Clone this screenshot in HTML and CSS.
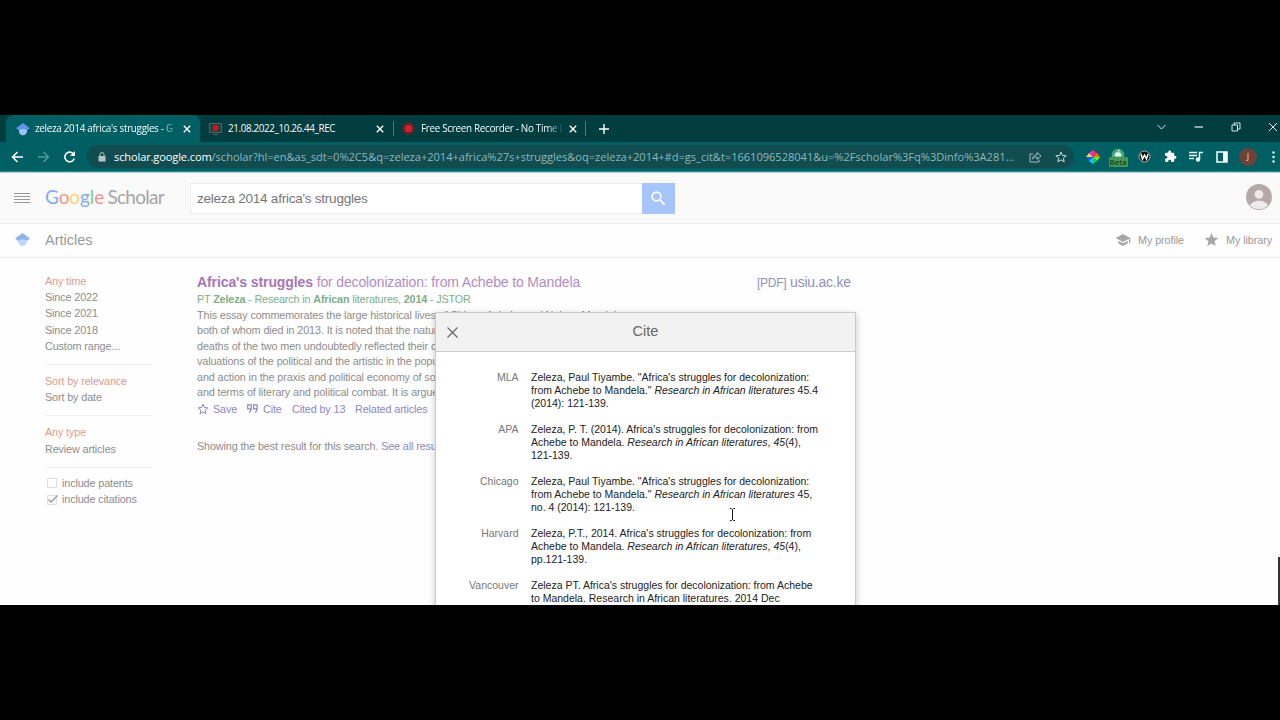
FILE: index.html
```html
<!DOCTYPE html>
<html lang="en">
<head>
<meta charset="UTF-8">
<meta name="viewport" content="width=device-width, initial-scale=1.0">
<title>zeleza 2014 africa's struggles - Google Scholar</title>
<link rel="stylesheet" href="styles.css">
</head>
<body>

<div class="window">
    <div class="tabs">
        <div class="tab active">
            <svg class="cap" width="14" height="14" viewBox="0 0 16 16"><path d="M8 5a4.6 4.6 0 0 1 4.6 5.2A4.6 4.6 0 0 1 8 15a4.6 4.6 0 0 1-4.6-4.8A4.6 4.6 0 0 1 8 5z" fill="#a0c3ff"/><path d="M8 1L0 7l3.500 2.500A6 6 0 0 1 8 8a6 6 0 0 1 4.500 1.500L16 7z" fill="#5f95ec"/></svg>
            <span class="tab-title">zeleza 2014 africa's struggles - G</span>
            <svg class="close" width="8" height="8" viewBox="0 0 8 8"><path d="M.8.8l6.4 6.4M7.2.8L.8 7.2"/></svg>
        </div>
        <div class="tab second">
            <svg class="cap" width="13" height="12" viewBox="0 0 13 12"><path d="M.5.5h12v9H.5zM4 11.5h5" fill="#283c40" stroke="#536468"/><circle cx="6.5" cy="5" r="3" fill="#cc1620"/></svg>
            <span class="tab-title">21.08.2022_10.26.44_REC</span>
            <svg class="close" width="8" height="8" viewBox="0 0 8 8"><path d="M.8.8l6.4 6.4M7.2.8L.8 7.2"/></svg>
        </div>
        <div class="tab third">
            <svg class="cap" width="13" height="13" viewBox="0 0 13 13"><circle cx="6.5" cy="6.5" r="5.6" fill="#301f24" stroke="#9c2228"/><circle cx="6.5" cy="6.5" r="4" fill="#d3202a"/></svg>
            <span class="tab-title">Free Screen Recorder - No Time L</span>
            <svg class="close" width="8" height="8" viewBox="0 0 8 8"><path d="M.8.8l6.4 6.4M7.2.8L.8 7.2"/></svg>
        </div>
        <svg class="new-tab" width="10" height="10" viewBox="0 0 10 10"><path d="M5 0v10M0 5h10" stroke="#fff" stroke-width="1.4"/></svg>
        <svg class="controls" width="124" height="14" viewBox="0 0 124 14" fill="none" stroke="#d9e8e8"><path d="M1.500 5l4 4 4-4"/><path d="M38.500 7h8.500" stroke-width="1.300"/><path d="M76 5h5.500v6H76zM78 5V3h6v6h-2.500"/><path d="M113 3l8 8M121 3l-8 8"/></svg>
    </div>

    <div class="toolbar">
        <svg class="nav" width="66" height="14" viewBox="0 0 66 14" fill="none"><path d="M12 7H2M6.500 2L1.500 7l5 5" stroke="#fff" stroke-width="1.500"/><path d="M27 7h10M32.500 2l5 5-5 5" stroke="#5c9a9c" stroke-width="1.300"/><path d="M62 3.500a4.800 4.800 0 1 0 1.200 5" stroke="#fff" stroke-width="1.600"/><path d="M64 1v5h-5z" fill="#fff"/></svg>
        <div class="address">
            <svg width="8" height="10" viewBox="0 0 8 10"><path d="M.5 4h7v5.500h-7z" fill="#b5c5c7"/><path d="M2 4V2.500a2 2 0 0 1 4 0V4" fill="none" stroke="#b5c5c7"/></svg>
            <div class="url"><b>scholar.google.com</b>/scholar?hl=en&amp;as_sdt=0%2C5&amp;q=zeleza+2014+africa%27s+struggles&amp;oq=zeleza+2014+#d=gs_cit&amp;t=1661096528041&amp;u=%2Fscholar%3Fq%3Dinfo%3A281...</div>
            <svg class="share" width="13" height="12" viewBox="0 0 13 12" fill="none" stroke="#a4bfc1"><path d="M4 3H1v8h9V8.500"/><path d="M3.500 8c.5-3 2-4.200 4.500-4.200V1.500L12 5 8 8.300V6C6 6 4.800 6.500 3.500 8z"/></svg>
            <svg class="star" width="12" height="12" viewBox="0 0 24 24"><path d="M12 2l2.900 6.900 7.500.6-5.700 4.900 1.700 7.300L12 17.800l-6.400 3.900 1.700-7.300-5.700-4.900 7.500-.6z" fill="none" stroke="#c7dada" stroke-width="2"/></svg>
        </div>
        <div class="extensions">
            <svg class="wheel" width="14" height="14" viewBox="0 0 14 14"><path d="M7 7V0l4 3z" fill="#ff2f32"/><path d="M7 7l4-4 3 4z" fill="#ff6c16"/><path d="M7 7h7l-3 4z" fill="#5cff18"/><path d="M7 7l4 4-4 3z" fill="#19cc55"/><path d="M7 7v7l-4-3z" fill="#12cdef"/><path d="M7 7l-4 4-3-4z" fill="#1b55ff"/><path d="M7 7H0l3-4z" fill="#e8e335"/><path d="M7 7L3 3l4-3z" fill="#fa26df"/></svg>
            <div class="beta"><svg width="14" height="10" viewBox="0 0 14 10"><path d="M1 10a6.300 6.300 0 1 1 12 0z" fill="#44a878"/><path d="M4 9c0-3 1.500-4 3-3 1.500-1 3 0 3 3zM7 5L8.500 2.500" fill="#e1fff0" stroke="#e1fff0"/></svg><span>Beta</span></div>
            <svg class="wiki" width="13" height="13" viewBox="0 0 13 13"><circle cx="6.500" cy="6.500" r="5.500" fill="#111" stroke="#a5b8b8"/><path d="M3 4l1.500 5L6.500 5l2 4L10 4" fill="none" stroke="#fff" stroke-width="1.400"/></svg>
            <svg class="puzzle" width="13" height="13" viewBox="0 0 24 24"><path d="M20.500 11H19V7a2 2 0 0 0-2-2h-4V3.500a2.500 2.500 0 0 0-5 0V5H4a2 2 0 0 0-2 2v3.800h1.500a2.700 2.700 0 0 1 0 5.400H2V20a2 2 0 0 0 2 2h3.800v-1.500a2.700 2.700 0 0 1 5.400 0V22H17a2 2 0 0 0 2-2v-4h1.500a2.500 2.500 0 0 0 0-5z" fill="#fff"/></svg>
            <svg class="media" width="14" height="12" viewBox="0 0 14 12"><path d="M0 1.500h8M0 4.500h8M0 7.500h5M10.500 8V1.500H14" fill="none" stroke="#e7ffff" stroke-width="1.500"/><circle cx="9" cy="8.500" r="2.200" fill="#e7ffff"/></svg>
            <svg class="panel" width="12" height="12" viewBox="0 0 12 12"><path d="M1 1h10v10H1z" fill="none" stroke="#fff" stroke-width="1.500"/><path d="M7 1h4v10H7z" fill="#fff"/></svg>
            <span class="account">J</span>
            <svg class="dots" width="3" height="12" viewBox="0 0 3 12" fill="#e4ffff"><circle cx="1.500" cy="1.500" r="1.200"/><circle cx="1.500" cy="6" r="1.200"/><circle cx="1.500" cy="10.500" r="1.200"/></svg>
        </div>
    </div>

    <div class="page">
        <div class="header">
            <div class="menu"><i></i><i></i><i></i><i></i></div>
            <div class="logo"><span class="blue">G</span><span class="red">o</span><span class="yellow">o</span><span class="blue">g</span><span class="green">l</span><span class="red">e</span> <em>Scholar</em></div>
            <div class="search">
                <div class="field">zeleza 2014 africa's struggles</div>
                <div class="search-button"><svg width="19" height="19" viewBox="0 0 24 24"><path d="M15.500 14h-.8l-.3-.3A6.500 6.500 0 1 0 13.700 14.400l.3.300v.8l5 5 1.500-1.500zM9.500 14a4.500 4.500 0 1 1 0-9 4.500 4.500 0 0 1 0 9z" fill="#fff"/></svg></div>
            </div>
            <svg class="avatar" width="26" height="26" viewBox="0 0 26 26"><circle cx="13" cy="13" r="13" fill="#b4a8a8"/><circle cx="13" cy="10.300" r="4.400" fill="#eeeaea"/><path d="M4 21.500c2-6.500 16-6.500 18 0a13 13 0 0 1-18 0z" fill="#eeeaea"/></svg>
        </div>

        <div class="subheader">
            <svg class="articles-icon" width="15" height="15" viewBox="0 0 16 16"><path d="M8 5a4.400 4.400 0 0 1 4.400 5A4.500 4.500 0 0 1 8 15a4.500 4.500 0 0 1-4.400-5A4.400 4.400 0 0 1 8 5z" fill="#bed7fc"/><path d="M8 1L0 7l3.500 2.500A6 6 0 0 1 8 8a6 6 0 0 1 4.500 1.500L16 7z" fill="#91b3e9"/></svg>
            <span class="articles">Articles</span>
            <svg class="school" width="16" height="16" viewBox="0 0 24 24"><path d="M5 13.200v4L12 21l7-3.800v-4L12 17zM12 3L1 9l11 6 9-4.900V17h2V9z" fill="#a7a7a7"/></svg>
            <span class="profile">My profile</span>
            <svg class="library-star" width="15" height="15" viewBox="0 0 24 24"><path d="M12 1.500l3 7.300 7.900.7-6 5.200 1.800 7.700-6.700-4.100-6.700 4.100 1.800-7.700-6-5.200 7.900-.7z" fill="#a7a7a7"/></svg>
            <span class="library">My library</span>
        </div>

        <div class="main">
            <div class="sidebar">
                <div class="group time">
                    <div class="selected">Any time</div>
                    <div>Since 2022</div>
                    <div>Since 2021</div>
                    <div>Since 2018</div>
                    <div>Custom range...</div>
                </div>
                <div class="group">
                    <div class="selected">Sort by relevance</div>
                    <div>Sort by date</div>
                </div>
                <div class="group">
                    <div class="selected">Any type</div>
                    <div>Review articles</div>
                </div>
                <div class="checks">
                    <div><svg width="12" height="12" viewBox="0 0 12 12"><path d="M1.500 1.500h9v9h-9z" fill="#fff" stroke="#dedede"/></svg>include patents</div>
                    <div><svg width="12" height="12" viewBox="0 0 12 12"><path d="M1.500 1.500h9v9h-9z" fill="#fff" stroke="#dedede"/><path d="M2.500 5.500L5 8l6.500-6.500" fill="none" stroke="#999" stroke-width="1.400"/></svg>include citations</div>
                </div>
            </div>

            <div class="results">
                <div class="title"><b>Africa's struggles</b> for decolonization: from Achebe to Mandela</div>
                <div class="byline">PT <b>Zeleza</b> - Research in <b>African</b> literatures, <b>2014</b> - JSTOR</div>
                <div class="abstract">
                    This essay commemorates the large historical lives of Chinua Achebe and Nelson Mandela,<br>
                    both of whom died in 2013. It is noted that the nature<br>
                    deaths of the two men undoubtedly reflected their di<br>
                    valuations of the political and the artistic in the popul<br>
                    and action in the praxis and political economy of soc<br>
                    and terms of literary and political combat. It is argued
                </div>
                <div class="actions">
                    <svg width="12" height="12" viewBox="0 0 24 24"><path d="M12 2.500l2.700 6.600 7.100.6-5.400 4.700 1.600 6.900-6-3.700-6 3.700 1.600-6.900-5.400-4.700 7.100-.6z" fill="none" stroke="#8c88c5" stroke-width="2"/></svg>
                    <span class="save">Save</span>
                    <svg width="11" height="10" viewBox="0 0 11 10" fill="none" stroke="#8c88c5" stroke-width="1.200"><path d="M4.300 4.800H.7V.8h3.600v4.500L2.500 8.800M10.200 4.800H6.600V.8h3.600v4.500L8.400 8.800"/></svg>
                    <span class="cite-link">Cite</span>
                    <span class="cited">Cited by 13</span>
                    <span>Related articles</span>
                </div>
                <div class="best">Showing the best result for this search. <span>See all results</span></div>
            </div>
            <div class="pdf"><small>[PDF]</small> usiu.ac.ke</div>
        </div>

        <div class="dialog">
            <div class="dialog-head">
                <svg width="11" height="11" viewBox="0 0 11 11"><path d="M.5.5l10 10M10.500.5l-10 10" stroke="#666" stroke-width="1.200"/></svg>
                <span>Cite</span>
            </div>
            <div class="citations">
                <div class="style">MLA</div>
                <div>Zeleza, Paul Tiyambe. "Africa's struggles for decolonization:<br>from Achebe to Mandela." <i>Research in African literatures</i> 45.4<br>(2014): 121-139.</div>
                <div class="style">APA</div>
                <div>Zeleza, P. T. (2014). Africa's struggles for decolonization: from<br>Achebe to Mandela. <i>Research in African literatures</i>, <i>45</i>(4),<br>121-139.</div>
                <div class="style">Chicago</div>
                <div>Zeleza, Paul Tiyambe. "Africa's struggles for decolonization:<br>from Achebe to Mandela." <i>Research in African literatures</i> 45,<br>no. 4 (2014): 121-139.</div>
                <div class="style">Harvard</div>
                <div>Zeleza, P.T., 2014. Africa's struggles for decolonization: from<br>Achebe to Mandela. <i>Research in African literatures</i>, <i>45</i>(4),<br>pp.121-139.</div>
                <div class="style">Vancouver</div>
                <div>Zeleza PT. Africa's struggles for decolonization: from Achebe<br>to Mandela. Research in African literatures. 2014 Dec</div>
            </div>
        </div>
        <div class="scrollbar"></div>
        <svg class="cursor" width="7" height="13" viewBox="0 0 7 13"><path d="M1 .5h1.500l1 1 1-1H6M3.500 1.500v10M1 12.500h1.500l1-1 1 1H6" fill="none" stroke="#111"/></svg>
    </div>
</div>

</body>
</html>
```

FILE: styles.css
```css
* {
    box-sizing: border-box;
}
body {
    margin: 0;
    height: 720px;
    padding-top: 115px;
    overflow: hidden;
    background: #000;
    font-family: "Liberation Sans", Arial, sans-serif;
    white-space: nowrap;
}
svg {
    display: block;
    flex-shrink: 0;
}
.window {
    height: 490px;
    overflow: hidden;
    background: #fefefe;
}

/* Browser */
.tabs {
    height: 27px;
    display: flex;
    align-items: center;
    background: #003d3f;
    color: #f4fbfb;
    font-family: "Open Sans", sans-serif;
    font-size: 9.9px;
    line-height: 27px;
}
.tab {
    display: flex;
    align-items: center;
    height: 27px;
    position: relative;
}
.tab.active {
    width: 194px;
    margin-left: 6px;
    padding-left: 10px;
    border-radius: 7px 7px 0 0;
    background: #005f62;
}
.tab.second {
    width: 194px;
    padding-left: 9px;
}
.tab.third {
    width: 192px;
    padding-left: 8px;
}
.second::after,
.third::after {
    content: "";
    position: absolute;
    right: 0;
    top: 6px;
    width: 1px;
    height: 15px;
    background: #477b7d;
}
.tab-title {
    width: 143px;
    margin-left: 5px;
    overflow: hidden;
    letter-spacing: -0.31px;
}
.active .tab-title,
.third .tab-title {
    -webkit-mask-image: linear-gradient(90deg, #000 88%, transparent);
    mask-image: linear-gradient(90deg, #000 88%, transparent);
}
.third .tab-title {
    margin-left: 6px;
}
.second .tab-title {
    width: 148px;
    margin-left: 6px;
    letter-spacing: -0.38px;
}
.close {
    margin-left: 5px;
    fill: none;
    stroke: #fff;
    stroke-width: 1.4;
}
.second .close {
    margin-left: 0;
}
.new-tab {
    margin-left: 13px;
}
.controls {
    margin: -4px 0 0 auto;
}
.toolbar {
    height: 30px;
    display: flex;
    align-items: center;
    background: #005f62;
    border-bottom: 1px solid #2d8386;
}
.nav {
    margin-left: 11px;
}
.address {
    height: 23px;
    width: 987px;
    margin-left: 10px;
    padding-left: 11px;
    display: flex;
    align-items: center;
    border-radius: 12px;
    background: #104c50;
}
.url {
    width: 905px;
    margin-left: 8px;
    color: #91b8ba;
    font: 11.1px/23px "Open Sans", sans-serif;
    letter-spacing: -0.03px;
}
.url b {
    color: #fff;
    font-weight: 400;
    letter-spacing: -0.14px;
}
.share {
    margin-left: 10px;
}
.star {
    margin-left: 13px;
}
.extensions {
    display: flex;
    align-items: center;
    margin-left: 12px;
}
.beta {
    width: 20px;
    height: 20px;
    margin-left: 8px;
    display: flex;
    flex-direction: column;
    align-items: center;
}
.beta span {
    width: 19px;
    height: 10px;
    border-radius: 1px;
    background: #459753;
    color: #092b14;
    font: 8px/9px "Open Sans", sans-serif;
    text-align: center;
}
.wiki {
    margin-left: 10px;
}
.puzzle {
    margin-left: 13px;
}
.media {
    margin-left: 12px;
}
.panel {
    margin-left: 13px;
}
.account {
    width: 18px;
    height: 18px;
    margin-left: 11px;
    border-radius: 50%;
    background: #6d4238;
    color: #f2dfda;
    font: 9px/18px "Open Sans", sans-serif;
    text-align: center;
}
.dots {
    margin-left: 15px;
}

/* Scholar page */
.page {
    position: relative;
    height: 433px;
    overflow: hidden;
}
.header {
    height: 52px;
    display: flex;
    align-items: center;
    background: #fafafa;
    border-top: 1px solid #a4d0d2;
    border-bottom: 1px solid #ececec;
}
.menu {
    width: 16px;
    height: 10px;
    margin: -1px 0 0 14px;
    display: flex;
    flex-direction: column;
    justify-content: space-between;
}
.menu i {
    height: 1px;
    background: #999;
}
.logo {
    width: 145px;
    margin: -3px 0 0 15px;
    font: 19px/24px Lato, sans-serif;
    letter-spacing: -0.1px;
}
.logo em {
    color: #a5a5a5;
    font-style: normal;
    margin-left: -1.5px;
    letter-spacing: -0.7px;
}
.blue { color: #85abee; }
.red { color: #ef948d; }
.yellow { color: #f8d36f; }
.green { color: #83c895; }
.search {
    display: flex;
    width: 485px;
    height: 31px;
    margin-top: 1px;
}
.field {
    width: 452px;
    padding-left: 6px;
    border: 1px solid #eee;
    border-right: 0;
    background: #fff;
    color: #777;
    font-size: 13.6px;
    line-height: 29px;
    letter-spacing: -0.27px;
}
.search-button {
    width: 33px;
    display: grid;
    place-items: center;
    background: #a5c5fc;
}
.avatar {
    margin: -2px 8px 0 auto;
}
.subheader {
    height: 34px;
    display: flex;
    align-items: center;
    border-bottom: 1px solid #ececec;
    padding-bottom: 2px;
    color: #999;
    font-size: 10.8px;
    letter-spacing: -0.08px;
}
.articles-icon {
    margin-left: 15px;
}
.articles {
    width: 1070px;
    margin-left: 15px;
    font-size: 14.5px;
    letter-spacing: 0;
}
.profile {
    width: 66px;
    margin-left: 7px;
}
.library {
    margin-left: 7px;
}
.main {
    display: flex;
    padding-left: 45px;
    color: #8d8d8d;
    font-size: 10.8px;
    letter-spacing: -0.12px;
}
.sidebar {
    width: 107px;
    padding-top: 15px;
    line-height: 16.2px;
}
.group {
    padding-bottom: 10px;
    margin-bottom: 8px;
    border-bottom: 1px solid #f0f0f0;
}
.selected {
    color: #df9b91;
}
.checks {
    margin-top: -1px;
}
.checks div {
    display: flex;
    align-items: center;
}
.checks svg {
    margin: 1px 4px 0 1px;
}
.results {
    width: 560px;
    margin-left: 45px;
    padding-top: 15px;
}
.title {
    height: 18px;
    color: #b38dc2;
    font-size: 14px;
    line-height: 18px;
    letter-spacing: -0.14px;
}
.title b {
    color: #a676b9;
    letter-spacing: -0.1px;
}
.byline {
    height: 17px;
    color: #7caf86;
    line-height: 16px;
    letter-spacing: -0.15px;
}
.abstract {
    line-height: 15.4px;
    letter-spacing: -0.11px;
}
.actions {
    height: 17px;
    display: flex;
    align-items: center;
    color: #8c88c5;
}
.save {
    width: 34px;
    margin-left: 4px;
}
.cite-link {
    width: 29px;
    margin-left: 5px;
}
.cited {
    width: 63px;
}
.best {
    margin-top: 23px;
    line-height: 13px;
}
.best span {
    color: #8c88c5;
}
.pdf {
    padding-top: 15px;
    color: #9290bd;
    font-size: 14px;
    line-height: 18px;
    letter-spacing: -0.24px;
}
.pdf small {
    font-size: 12px;
}

/* Citation dialog */
.dialog {
    position: absolute;
    left: 435px;
    top: 140px;
    width: 421px;
    height: 320px;
    border: 1px solid #c9c9c9;
    background: #fff;
    box-shadow: 0 2px 7px rgba(0, 0, 0, 0.22);
}
.dialog-head {
    height: 39px;
    display: flex;
    align-items: center;
    border-bottom: 1px solid #ccc;
    background: #f2f2f2;
    color: #666;
    font-size: 14.5px;
}
.dialog-head svg {
    margin-left: 11px;
}
.dialog-head span {
    width: 375px;
    padding-bottom: 2px;
    text-align: center;
}
.citations {
    display: grid;
    grid-template-columns: 82.5px 300px;
    column-gap: 12.5px;
    row-gap: 13px;
    padding-top: 19px;
    color: #222;
    font-size: 10.5px;
    line-height: 13px;
}
.style {
    color: #777;
    text-align: right;
}
.scrollbar {
    position: absolute;
    right: 0;
    top: 385px;
    width: 2px;
    height: 48px;
    background: #333;
}
.cursor {
    position: absolute;
    left: 729px;
    top: 336px;
}
```
